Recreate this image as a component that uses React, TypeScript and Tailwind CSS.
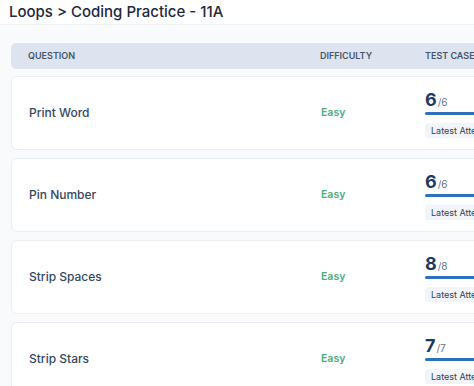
const questions = [
  { name: "Print Word", difficulty: "Easy", passed: 6, total: 6 },
  { name: "Pin Number", difficulty: "Easy", passed: 6, total: 6 },
  { name: "Strip Spaces", difficulty: "Easy", passed: 8, total: 8 },
  { name: "Strip Stars", difficulty: "Easy", passed: 7, total: 7 },
];

export default function App() {
  return (
    <div
      className="h-[386px] w-[474px] overflow-hidden bg-[#f8fafc]"
      style={{ fontFamily: "Inter, 'Noto Sans', sans-serif" }}
    >
      <header className="h-[25px] bg-white px-[9px] pt-[2px] border-b border-[#f0f2f5]">
        <h1 className="text-[15px] font-medium leading-[20px] text-[#1e293b]">
          Loops &gt; Coding Practice - 11A
        </h1>
      </header>
      <section className="w-[640px] pl-[11px] pt-[18px]">
        <div className="grid h-[26px] grid-cols-[292px_105px_1fr] items-center rounded-[5px] bg-[#dde4f0] pl-[17px] text-[9px] font-semibold text-[#475569]">
          <span>QUESTION</span>
          <span>DIFFICULTY</span>
          <span>TEST CASES</span>
        </div>
        <ul className="mt-[7px] flex flex-col gap-[8px]">
          {questions.map((q) => (
            <li
              key={q.name}
              className="grid h-[74px] grid-cols-[292px_104px_1fr] items-center rounded-[6px] border border-[#eaeef3] bg-white pl-[17px]"
            >
              <span className="text-[12px] font-medium text-[#374760]">
                {q.name}
              </span>
              <span className="text-[10.5px] font-semibold text-[#4dab80]">
                {q.difficulty}
              </span>
              <div className="flex flex-col self-stretch pt-[14px]">
                <div className="flex h-[17px] items-baseline leading-none">
                  <span className="text-[18px] font-bold text-[#1e3a5f]">
                    {q.passed}
                  </span>
                  <span className="ml-[1px] text-[10px] text-[#64748b]">/{q.total}</span>
                </div>
                <div className="mt-[4px] h-[3px] w-full rounded-full bg-[#2e6fbe]"></div>
                <div className="mt-[8px] h-[15px] w-[120px] rounded-[3px] bg-[#f1f4f8] pl-[6px] text-[9px] leading-[15px] text-[#334155]">
                  Latest Attempt
                </div>
              </div>
            </li>
          ))}
        </ul>
      </section>
    </div>
  );
}
